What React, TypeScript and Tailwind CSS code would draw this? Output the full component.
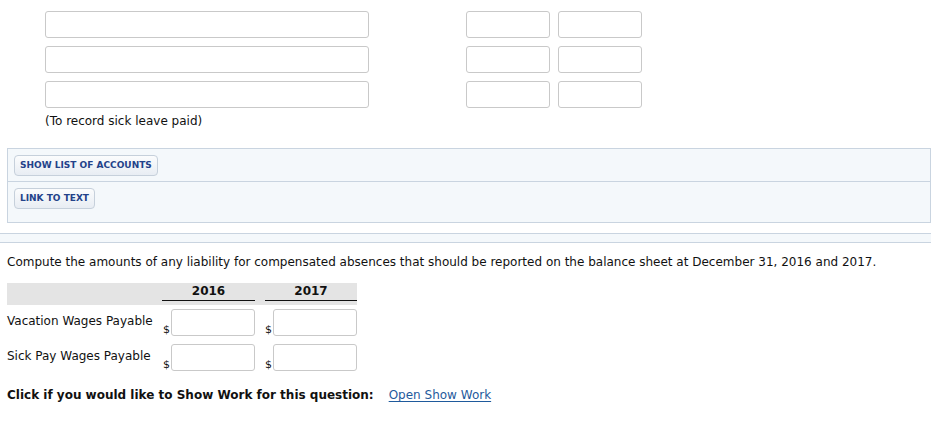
import React from "react";

const font = { fontFamily: '"DejaVu Sans", Verdana, sans-serif' };

function Box({ w }: { w: string }) {
  return <div className={`${w} h-[27px] rounded-[3px] border border-[#c9c9c9] bg-white`} />;
}

function JournalRow() {
  return (
    <div className="flex items-start">
      <div className="w-[324px] h-[27px] rounded-[3px] border border-[#c9c9c9] bg-white" />
      <div className="ml-[97px] w-[84px] h-[27px] rounded-[3px] border border-[#c9c9c9] bg-white" />
      <div className="ml-[8px] w-[84px] h-[27px] rounded-[3px] border border-[#c9c9c9] bg-white" />
    </div>
  );
}

function Btn({ children }: { children: React.ReactNode }) {
  return (
    <div className="h-[21px] px-[5px] rounded-[4px] border border-[#c6d0db] bg-gradient-to-b from-[#fbfcfd] to-[#e8edf3] text-[9px] font-bold leading-[19px] text-[#23428a]">
      {children}
    </div>
  );
}

function MoneyRow({ label, top }: { label: string; top: string }) {
  return (
    <div className={`flex items-start ${top}`}>
      <div className="w-[156px] pt-[5px] text-[12px] leading-[15px] text-[#111]">{label}</div>
      <div className="flex items-start">
        <span className="mt-[15px] w-[8px] text-[11px] leading-[12px] text-[#111]">$</span>
        <Box w="w-[84px]" />
      </div>
      <div className="ml-[10px] flex items-start">
        <span className="mt-[15px] w-[8px] text-[11px] leading-[12px] text-[#111]">$</span>
        <Box w="w-[84px]" />
      </div>
    </div>
  );
}

export default function App() {
  return (
    <div className="w-[931px] h-[427px] overflow-hidden bg-white" style={font}>
      <div className="pl-[45px] pt-[11px] flex flex-col gap-[8px]">
        <JournalRow />
        <JournalRow />
        <JournalRow />
      </div>
      <div className="pl-[45px] mt-[5px] text-[12px] leading-[16px] text-[#111]">(To record sick leave paid)</div>

      <div className="ml-[7px] mt-[19px] border border-[#c9d4e0] bg-[#f4f8fb]">
        <div className="h-[33px] pl-[6px] pt-[6px] border-b border-[#c9d4e0] flex items-start">
          <Btn>SHOW LIST OF ACCOUNTS</Btn>
        </div>
        <div className="h-[40px] pl-[6px] pt-[6px] flex items-start">
          <Btn>LINK TO TEXT</Btn>
        </div>
      </div>

      <div className="mt-[10px] h-[10px] border-t border-b border-[#c9d4e0] bg-[#f4f8fb]" />

      <div className="pl-[7px] pt-[11px]">
        <div className="text-[12px] leading-[16px] text-[#111]">
          Compute the amounts of any liability for compensated absences that should be reported on the balance sheet at December 31, 2016 and 2017.
        </div>
        <div className="mt-[13px] w-[350px] h-[22px] bg-[#e4e4e4] flex items-start">
          <div className="w-[155px]" />
          <div className="w-[93px] h-[18px] border-b border-[#111] text-center text-[12px] font-bold leading-[17px] text-[#111]">2016</div>
          <div className="ml-[10px] w-[92px] h-[18px] border-b border-[#111] text-center text-[12px] font-bold leading-[17px] text-[#111]">2017</div>
        </div>
        <MoneyRow label="Vacation Wages Payable" top="mt-[4px]" />
        <MoneyRow label="Sick Pay Wages Payable" top="mt-[8px]" />
        <div className="mt-[16px] flex items-baseline text-[12px] leading-[16px]">
          <span className="font-bold text-[#111]">Click if you would like to Show Work for this question:</span>
          <a className="ml-[15px] text-[#1f5a9c] underline underline-offset-2" href="#">Open Show Work</a>
        </div>
      </div>
    </div>
  );
}
